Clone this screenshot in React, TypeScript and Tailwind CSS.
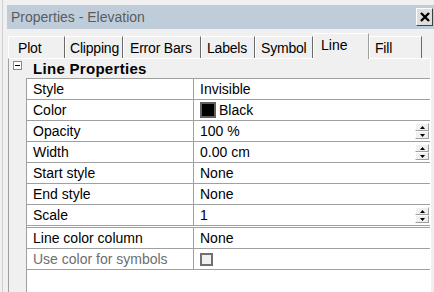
import React from 'react';

type Row = {
    label: string;
    value?: string;
    spin?: boolean;
    swatch?: boolean;
    check?: boolean;
    disabled?: boolean;
};

const topRows: Row[] = [
    { label: 'Style', value: 'Invisible' },
    { label: 'Color', value: 'Black', swatch: true },
    { label: 'Opacity', value: '100 %', spin: true },
    { label: 'Width', value: '0.00 cm', spin: true },
    { label: 'Start style', value: 'None' },
    { label: 'End style', value: 'None' },
    { label: 'Scale', value: '1', spin: true },
];

const bottomRows: Row[] = [
    { label: 'Line color column', value: 'None' },
    { label: 'Use color for symbols', check: true, disabled: true },
];

const tabs = [
    { name: 'Plot', w: 'w-[57px]', pl: 'pl-[9px]' },
    { name: 'Clipping', w: 'w-[58px]', pl: 'pl-[4px]' },
    { name: 'Error Bars', w: 'w-[78px]', pl: 'pl-[6px]' },
    { name: 'Labels', w: 'w-[54px]', pl: 'pl-[5px]' },
    { name: 'Symbol', w: 'w-[58px]', pl: 'pl-[5px]' },
    { name: 'Line', w: 'w-[56px]', pl: 'pl-[7px]', active: true },
    { name: 'Fill', w: 'w-[53px]', pl: 'pl-[5px]' },
];

const SpinButton: React.FC<{ up?: boolean }> = ({ up }) => (
    <div className="w-[14px] h-[8px] bg-[#f0f0f0] border border-t-white border-l-white border-r-[#a0a0a0] border-b-[#a0a0a0] flex items-center justify-center">
        <svg width="5" height="3" viewBox="0 0 5 3">
            {up ? <path d="M2.5 0 L5 3 L0 3 Z" fill="#000" /> : <path d="M0 0 L5 0 L2.5 3 Z" fill="#000" />}
        </svg>
    </div>
);

const PropRow: React.FC<{ row: Row }> = ({ row }) => (
    <div className="h-[21px] flex border-b border-[#a0a0a0] bg-white">
        <div className={`w-[167px] shrink-0 border-r border-[#a0a0a0] pl-[6px] flex items-center ${row.disabled ? 'text-[#6d6d6d]' : 'text-black'}`}>
            {row.label}
        </div>
        <div className="flex-1 pl-[6px] flex items-center">
            {row.swatch && <div className="w-[16px] h-[16px] border-2 border-[#606060] bg-black mr-[3px]" />}
            {row.check && <div className="w-[13px] h-[13px] border-2 border-[#707070] bg-[#f0f0f0]" />}
            {row.value && <span>{row.value}</span>}
            {row.spin && (
                <div className="ml-auto mr-[1px] flex flex-col">
                    <SpinButton up />
                    <SpinButton />
                </div>
            )}
        </div>
    </div>
);

export default function App() {
    return (
        <div className="w-[434px] h-[292px] overflow-hidden bg-[#f0f0f0] flex text-[14px] leading-none text-black" style={{ fontFamily: '"Liberation Sans", Arial, sans-serif' }}>
            <div className="ml-[2px] w-[5px] shrink-0 border-l border-[#d0d0d0]" />
            <div className="flex-1 flex flex-col min-w-0">
                {/* title bar */}
                <div className="mt-[5px] h-[24px] bg-[#bfcddb] flex items-center justify-between pl-[4px]">
                    <span className="text-[#5c5c5c]">Properties - Elevation</span>
                    <div className="w-[17px] h-[18px] mr-[1px] bg-[#dedede] border border-t-white border-l-white border-r-[#404040] border-b-[#404040] flex items-center justify-center">
                        <svg width="10" height="10" viewBox="0 0 10 10">
                            <path d="M1 1 L9 9 M9 1 L1 9" stroke="#000" strokeWidth="2.4" />
                        </svg>
                    </div>
                </div>

                {/* tabs */}
                <div className="mt-[4px] h-[25px] flex items-end pl-[1px]">
                    {tabs.map((t) =>
                        t.active ? (
                            <div key={t.name} className={`${t.w} ${t.pl} h-[26px] -mb-px relative z-10 bg-[#f0f0f0] border-l border-t border-white border-r border-r-[#a0a0a0] pt-[4px]`}>
                                {t.name}
                            </div>
                        ) : (
                            <div key={t.name} className={`${t.w} ${t.pl} h-[22px] overflow-hidden whitespace-nowrap bg-[#f0f0f0] border-l border-t border-white border-r border-r-[#696969] flex items-center pt-[1px] tracking-[-0.2px]`}>
                                {t.name}
                            </div>
                        )
                    )}
                </div>

                {/* panel */}
                <div className="flex-1 ml-[1px] mr-[3px] border-t border-white border-l border-l-[#a0a0a0] border-r border-r-white flex flex-col">
                    <div className="h-[19px] flex items-center">
                        <div className="w-[17px] shrink-0 h-full pl-[4px] pt-[2px]">
                            <div className="w-[9px] h-[9px] border border-[#8a8a8a] bg-white flex items-center justify-center">
                                <div className="w-[5px] h-px bg-black" />
                            </div>
                        </div>
                        <span className="pl-[7px] font-bold text-[15px] tracking-[0.3px]">Line Properties</span>
                    </div>
                    <div className="flex-1 flex">
                        <div className="w-[17px] shrink-0" />
                        <div className="flex-1 border-l border-t border-[#a0a0a0] bg-white flex flex-col">
                            {topRows.map((r) => (
                                <PropRow key={r.label} row={r} />
                            ))}
                            <div className="h-[2px] border-b border-[#a0a0a0] bg-white" />
                            {bottomRows.map((r) => (
                                <PropRow key={r.label} row={r} />
                            ))}
                        </div>
                    </div>
                </div>
            </div>
        </div>
    );
}
